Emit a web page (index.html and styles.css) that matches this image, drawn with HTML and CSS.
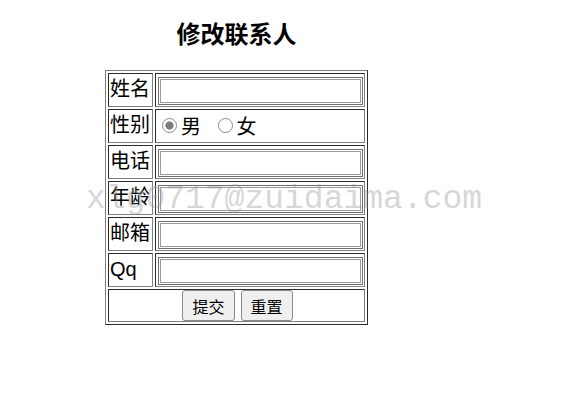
FILE: index.html
```html
<!DOCTYPE html>
<html lang="zh-CN">
<head>
  <meta charset="UTF-8">
  <title>修改联系人</title>
  <link rel="stylesheet" href="styles.css">
</head>
<body>

<!-- 修改联系人表单 -->
<div class="wrap">
  <h2 class="title">修改联系人</h2>
  <form class="contact-form" action="#" method="post">
    <table class="form-table">
      <tr>
        <td class="label">姓名</td>
        <td><input type="text" class="text-input" name="name"></td>
      </tr>
      <tr class="row-radio">
        <td class="label">性别</td>
        <td>
          <label class="radio"><input type="radio" name="sex" value="男" checked>男</label>
          <label class="radio"><input type="radio" name="sex" value="女">女</label>
        </td>
      </tr>
      <tr>
        <td class="label">电话</td>
        <td><input type="text" class="text-input" name="phone"></td>
      </tr>
      <tr>
        <td class="label">年龄</td>
        <td><input type="text" class="text-input" name="age"></td>
      </tr>
      <tr>
        <td class="label">邮箱</td>
        <td><input type="text" class="text-input" name="email"></td>
      </tr>
      <tr>
        <td class="label">Qq</td>
        <td><input type="text" class="text-input" name="qq"></td>
      </tr>
      <tr class="row-buttons">
        <td colspan="2">
          <div class="buttons">
            <button type="submit" class="btn">提交</button>
            <button type="reset" class="btn">重置</button>
          </div>
        </td>
      </tr>
    </table>
  </form>
</div>

<!-- 水印 -->
<div class="watermark">xlg0717@zuidaima.com</div>

</body>
</html>
```

FILE: styles.css
```css
/* 基本布局 */
body {
  margin: 8px;
  font-family: "Liberation Sans", "Noto Sans CJK SC", sans-serif;
  background: #fff;
  color: #000;
}
.wrap {
  width: 263px;
  margin-left: 97px;
}
.title {
  margin: 8px 0 20px;
  font-size: 24px;
  line-height: 34px;
  font-weight: bold;
  text-align: center;
  font-family: "Noto Sans CJK SC", sans-serif;
}
.contact-form {
  margin: 0;
}

/* 表格 (border=1 样式) */
.form-table {
  border: 1px outset grey;
  border-spacing: 2px;
  width: 263px;
}
.form-table td {
  box-sizing: border-box;
  border: 1px inset grey;
  padding: 1px;
  height: 34px;
  font-size: 20px;
  line-height: 28px;
  vertical-align: middle;
}
.form-table td.label {
  width: 45px;
  padding-bottom: 3px;
  white-space: nowrap;
}
.form-table .row-radio td {
  height: 31px;
}
.form-table .row-buttons td {
  height: 33px;
  padding: 0;
}

/* 输入框 */
.text-input {
  box-sizing: border-box;
  display: block;
  width: 205px;
  height: 28px;
  margin: 1px 0 0 1px;
  border: 1px solid #6f6f6f;
  box-shadow: inset 0 0 0 1px #fff, inset 0 0 0 2px #9a9a9a;
  padding: 0 4px;
  font-size: 16px;
  background: #fff;
}

/* 单选框 */
.radio {
  display: inline-flex;
  align-items: center;
  margin-left: 5px;
  margin-right: 6px;
  font-family: "Noto Sans CJK SC", sans-serif;
}
.radio input {
  appearance: none;
  -webkit-appearance: none;
  flex: none;
  box-sizing: border-box;
  width: 15px;
  height: 15px;
  margin: 0 4px 0 0;
  border: 1px solid #8a8a8a;
  border-radius: 50%;
  background: #fff;
}
.radio input:checked {
  background: radial-gradient(circle, #7c7c7c 0 3.8px, #fff 4.4px);
}

/* 按钮 */
.buttons {
  display: flex;
  justify-content: center;
  gap: 6px;
  padding-left: 2px;
}
.btn {
  height: 31px;
  padding: 0 9px;
  border: 1px solid #8a8a8a;
  border-radius: 3px;
  background: #efefef;
  font-size: 16px;
  font-family: "Noto Sans CJK SC", sans-serif;
  color: #000;
}

/* 水印 */
.watermark {
  position: absolute;
  left: 86px;
  top: 183px;
  font-family: "Liberation Mono", monospace;
  font-size: 33px;
  line-height: 34px;
  color: rgba(150, 150, 150, 0.4);
  white-space: nowrap;
  pointer-events: none;
}
```
